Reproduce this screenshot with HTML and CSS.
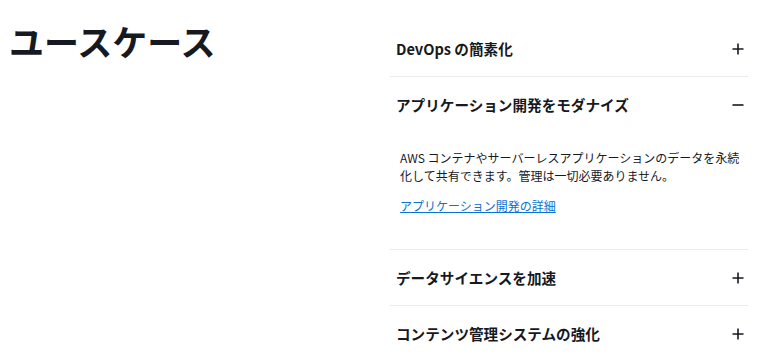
FILE: index.html
```html
<!DOCTYPE html>
<html lang="ja">

<head>
    <title>ユースケース</title>
    <meta charset="utf-8">
    <meta name="viewport" content="width=device-width, initial-scale=1.0">
    <link rel="stylesheet" href="styles.css">
</head>

<body>

    <main class="usecases">
        <h1 class="titel">ユースケース</h1>

        <section class="liste">
            <div class="punkt">
                <button class="hoved">
                    <span>DevOps の簡素化</span>
                    <svg class="ikon" viewBox="0 0 12 12"><path d="M6 0.5v11M0.5 6h11" /></svg>
                </button>
            </div>

            <div class="punkt aaben">
                <button class="hoved">
                    <span>アプリケーション開発をモダナイズ</span>
                    <svg class="ikon" viewBox="0 0 12 12"><path d="M0.5 6h11" /></svg>
                </button>
                <div class="indhold">
                    <p>AWS コンテナやサーバーレスアプリケーションのデータを永続化して共有できます。管理は一切必要ありません。</p>
                    <a href="#">アプリケーション開発の詳細</a>
                </div>
            </div>

            <div class="punkt">
                <button class="hoved">
                    <span>データサイエンスを加速</span>
                    <svg class="ikon" viewBox="0 0 12 12"><path d="M6 0.5v11M0.5 6h11" /></svg>
                </button>
            </div>

            <div class="punkt">
                <button class="hoved">
                    <span>コンテンツ管理システムの強化</span>
                    <svg class="ikon" viewBox="0 0 12 12"><path d="M6 0.5v11M0.5 6h11" /></svg>
                </button>
            </div>
        </section>
    </main>

</body>

</html>
```

FILE: styles.css
```css
body {
    margin: 0;
    background-color: #fff;
    color: #16191f;
    font-family: "Noto Sans CJK JP", "Noto Sans", sans-serif;
}

.usecases {
    display: flex;
    justify-content: space-between;
    padding: 21px 20px 0 9px;
}

.titel {
    margin: 0;
    font-size: 35px;
    font-weight: 700;
    line-height: 40px;
}

/* ACCORDION */

.liste {
    width: 358px;
}

.punkt {
    border-bottom: 1px solid #e9ebed;
}

.punkt:last-child {
    border-bottom: none;
}

.hoved {
    display: flex;
    align-items: center;
    justify-content: space-between;
    width: 100%;
    height: 55px;
    padding: 0 4px 0 6px;
    border: none;
    background: none;
    color: #16191f;
    font-family: inherit;
    font-size: 14.6px;
    font-weight: 700;
    text-align: left;
}

.ikon {
    width: 12px;
    height: 12px;
    fill: none;
    stroke: #16191f;
    stroke-width: 1.6;
}

.indhold {
    padding: 17px 0 34px 10px;
    font-size: 12px;
    line-height: 18px;
}

.indhold p {
    margin: 0 0 12px 0;
}

.indhold a {
    color: #0972d3;
    text-decoration: underline;
}
```
